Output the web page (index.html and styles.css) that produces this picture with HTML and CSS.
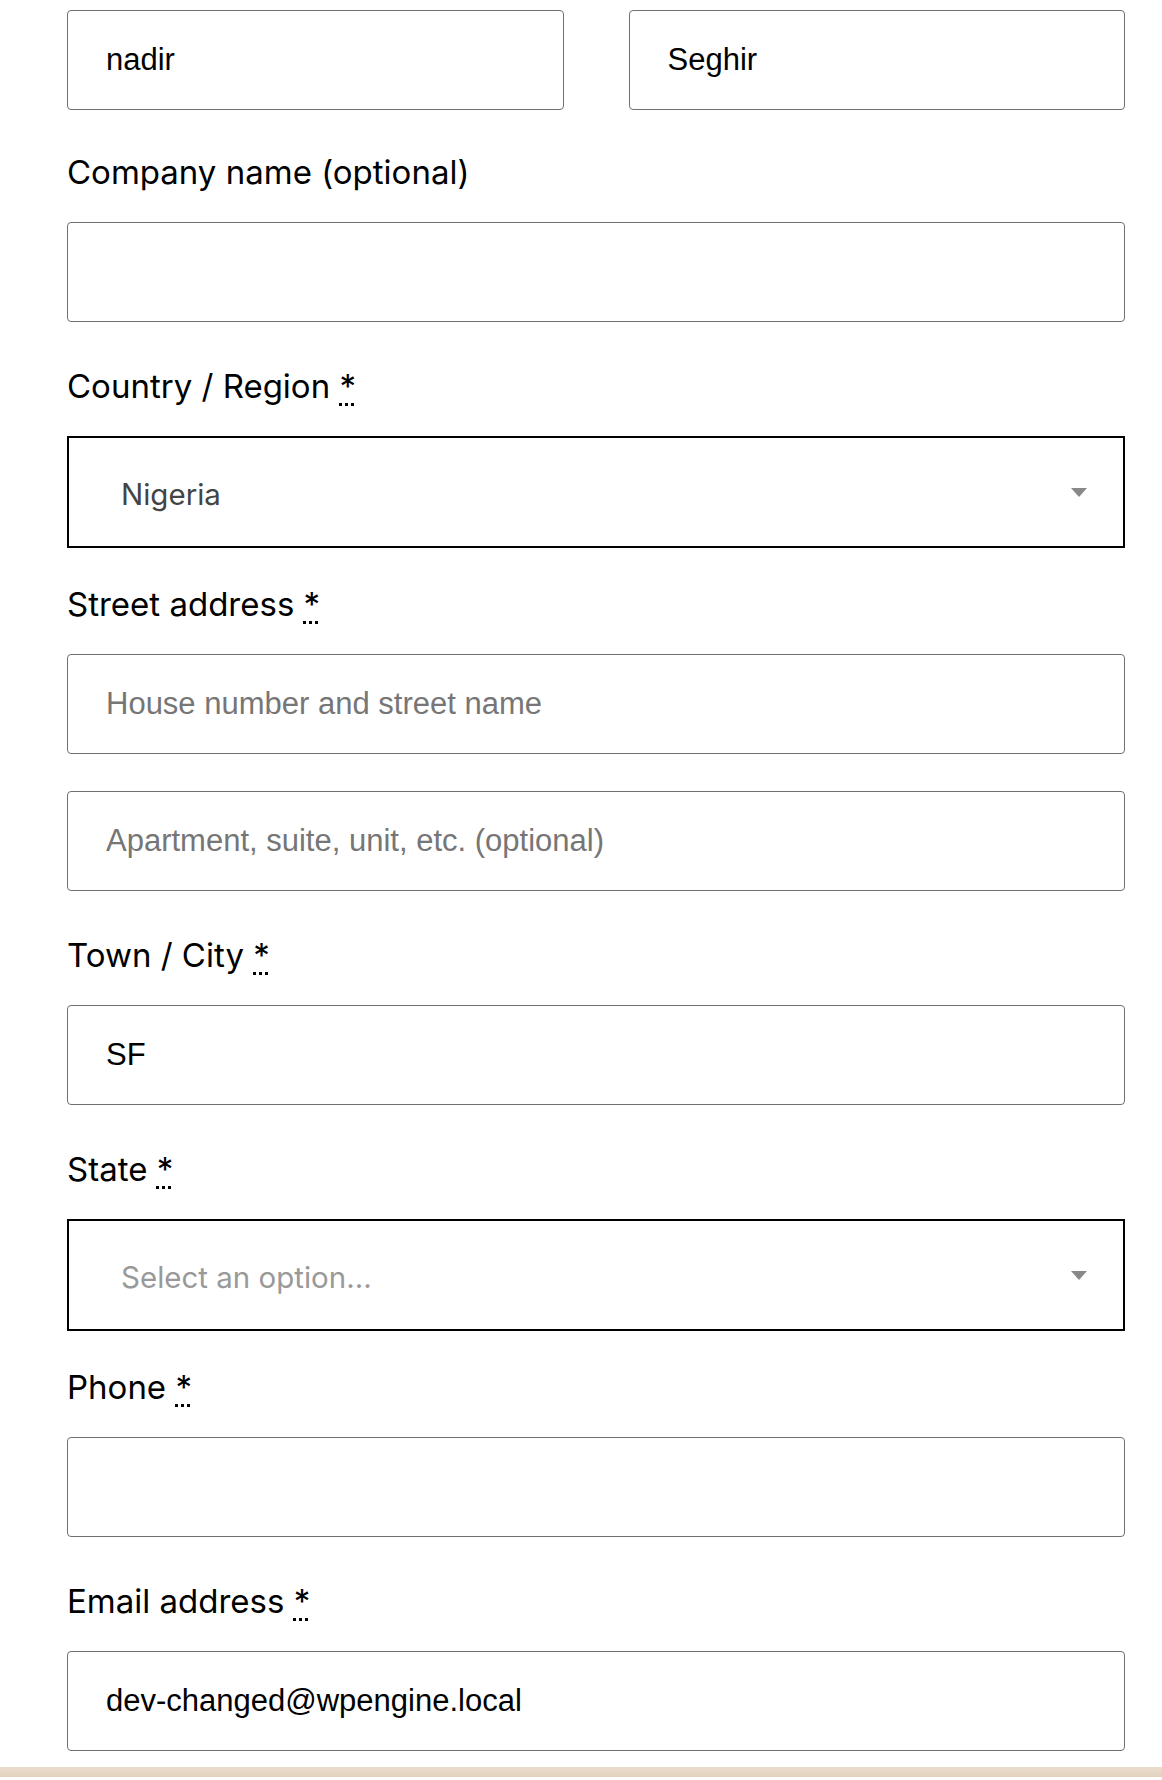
FILE: index.html
```
<!DOCTYPE html>
<html lang="en">
<head>
<meta charset="utf-8">
<title>Billing details</title>
<link rel="stylesheet" href="styles.css">
</head>
<body>
<main class="checkout">
  <form class="billing">
    <div class="row row-names">
      <div class="col"><input class="text-input" type="text" value="nadir" aria-label="First name"></div>
      <div class="col"><input class="text-input" type="text" value="Seghir" aria-label="Last name"></div>
    </div>

    <div class="row">
      <label class="field-label" for="company">Company name (optional)</label>
      <input class="text-input" id="company" type="text" value="">
    </div>

    <div class="row row-select">
      <label class="field-label">Country / Region <abbr class="required" title="required">*</abbr></label>
      <div class="select">
        <span class="select-value">Nigeria</span>
        <svg class="select-arrow" width="16" height="9" viewBox="0 0 16 9" aria-hidden="true"><path d="M0 0H16L8 9Z"/></svg>
      </div>
    </div>

    <div class="row">
      <label class="field-label" for="addr1">Street address <abbr class="required" title="required">*</abbr></label>
      <input class="text-input" id="addr1" type="text" placeholder="House number and street name">
      <input class="text-input text-input-second" type="text" placeholder="Apartment, suite, unit, etc. (optional)" aria-label="Apartment">
    </div>

    <div class="row">
      <label class="field-label" for="city">Town / City <abbr class="required" title="required">*</abbr></label>
      <input class="text-input" id="city" type="text" value="SF">
    </div>

    <div class="row row-select">
      <label class="field-label">State <abbr class="required" title="required">*</abbr></label>
      <div class="select">
        <span class="select-value select-placeholder">Select an option…</span>
        <svg class="select-arrow" width="16" height="9" viewBox="0 0 16 9" aria-hidden="true"><path d="M0 0H16L8 9Z"/></svg>
      </div>
    </div>

    <div class="row">
      <label class="field-label" for="phone">Phone <abbr class="required" title="required">*</abbr></label>
      <input class="text-input" id="phone" type="tel" value="">
    </div>

    <div class="row row-last">
      <label class="field-label" for="email">Email address <abbr class="required" title="required">*</abbr></label>
      <input class="text-input" id="email" type="email" value="dev-changed@wpengine.local">
    </div>
  </form>
</main>
<footer class="site-footer"></footer>
</body>
</html>
```

FILE: styles.css
```
html, body {
  margin: 0;
  padding: 0;
  background: #ffffff;
}

body {
  font-family: Inter, "Noto Sans", sans-serif;
  color: #000;
}

.checkout {
  padding-top: 10px;
}

.billing {
  width: 1058px;
  margin-left: 67px;
}

.row {
  margin-bottom: 37px;
}

.row-names {
  display: grid;
  grid-template-columns: 1fr 1fr;
  column-gap: 65px;
  margin-bottom: 35px;
}

.row-select {
  margin-bottom: 29px;
}

.row-last {
  margin-bottom: 16px;
}

.field-label {
  display: block;
  font-size: 33px;
  line-height: 54px;
  margin-bottom: 23px;
  color: #000;
}

.required {
  text-decoration: underline dotted;
  text-underline-offset: 5px;
  text-decoration-thickness: 3px;
  cursor: help;
}

.text-input {
  display: block;
  box-sizing: border-box;
  width: 100%;
  height: 100px;
  margin: 0;
  padding: 0 38px;
  border: 1px solid #707070;
  border-radius: 4px;
  background: #fff;
  font-family: "Liberation Sans", Arial, sans-serif;
  font-size: 31px;
  color: #000;
  outline: none;
}

.text-input::placeholder {
  color: #767676;
  opacity: 1;
}

.text-input-second {
  margin-top: 37px;
}

.select {
  display: flex;
  align-items: center;
  box-sizing: border-box;
  height: 112px;
  padding: 4px 36px 0 52px;
  border: 2px solid #000;
  background: #fff;
}

.select-value {
  flex: 1;
  font-size: 29.5px;
  color: #444;
}

.select-placeholder {
  color: #999;
}

.select-arrow {
  display: block;
  fill: #888;
  margin-top: -4px;
}

.site-footer {
  height: 10px;
  background: linear-gradient(180deg, #e9dccd, #e3d2bf);
}
```
